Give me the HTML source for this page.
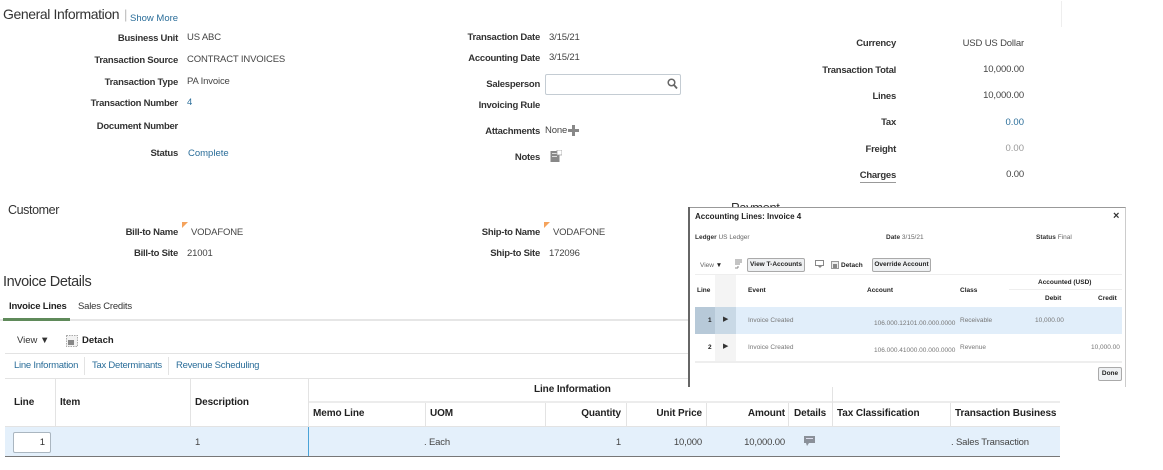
<!DOCTYPE html>
<html><head><meta charset="utf-8"><style>
*{margin:0;padding:0;box-sizing:border-box}
body{width:1163px;height:469px;overflow:hidden;background:#fff;font-family:"Liberation Sans",Arial,sans-serif;position:relative;color:#333}
#w{position:absolute;left:0;top:1px;width:1163px;height:469px}
.a{position:absolute;white-space:nowrap;font-size:9.5px;line-height:12px}
.l{font-weight:bold;color:#333;text-align:right;letter-spacing:-0.25px}
.v{color:#444;letter-spacing:-0.15px}
.b{color:#2a6d99}
.h{position:absolute;white-space:nowrap;color:#333;letter-spacing:-0.4px}
.hl{position:absolute;background:#e3e3e3}
.th{position:absolute;font-weight:bold;font-size:10px;color:#222;white-space:nowrap;letter-spacing:-0.1px}
.flag{position:absolute;width:0;height:0;border-top:6px solid #f5a35c;border-right:6px solid transparent}
</style></head><body><div id="w">

<div class="h" style="left:3px;top:5px;font-size:14px">General Information</div>
<div class="a" style="left:124px;top:8px;color:#bbb;font-size:13px">|</div>
<div class="a b" style="left:130px;top:12px">Show More</div>
<div style="position:absolute;left:1061px;top:0;width:1px;height:26px;background:#eee"></div>

<div class="a l" style="right:985px;top:32px">Business Unit</div><div class="a v" style="left:187px;top:31px">US ABC</div>
<div class="a l" style="right:985px;top:54px">Transaction Source</div><div class="a v" style="left:187px;top:53px">CONTRACT INVOICES</div>
<div class="a l" style="right:985px;top:76px">Transaction Type</div><div class="a v" style="left:187px;top:75px">PA Invoice</div>
<div class="a l" style="right:985px;top:97px">Transaction Number</div><div class="a b" style="left:187px;top:96px">4</div>
<div class="a l" style="right:985px;top:120px">Document Number</div>
<div class="a l" style="right:985px;top:147px">Status</div><div class="a b" style="left:188px;top:147px">Complete</div>

<div class="a l" style="right:623px;top:31px">Transaction Date</div><div class="a v" style="left:549px;top:31px">3/15/21</div>
<div class="a l" style="right:623px;top:52px">Accounting Date</div><div class="a v" style="left:549px;top:51px">3/15/21</div>
<div class="a l" style="right:623px;top:78px">Salesperson</div>
<div style="position:absolute;left:545px;top:73px;width:136px;height:21px;border:1px solid #c4ccd3;border-radius:2px"></div>
<svg style="position:absolute;left:667px;top:77px" width="11" height="12" viewBox="0 0 11 12"><circle cx="4.5" cy="4.5" r="3.3" fill="none" stroke="#666" stroke-width="1.5"/><path d="M7 7l3 3.5" stroke="#666" stroke-width="1.8"/></svg>
<div class="a l" style="right:623px;top:99px">Invoicing Rule</div>
<div class="a l" style="right:623px;top:125px">Attachments</div><div class="a v" style="left:545px;top:124px">None</div>
<svg style="position:absolute;left:568px;top:124px" width="11" height="11"><path d="M4 0h3v4h4v3H7v4H4V7H0V4h4z" fill="#888"/></svg>
<div class="a l" style="right:623px;top:151px">Notes</div>
<svg style="position:absolute;left:550px;top:149px" width="12" height="13"><rect x="0.5" y="1" width="9" height="11" fill="#888"/><rect x="2" y="3" width="5" height="1" fill="#ddd"/><rect x="2" y="6" width="5" height="1" fill="#ddd"/><rect x="7" y="0" width="5" height="5" fill="#fff" stroke="#999" stroke-width="0.7"/></svg>

<div class="a l" style="right:267px;top:37px">Currency</div><div class="a v" style="right:139px;top:37px">USD US Dollar</div>
<div class="a l" style="right:267px;top:64px">Transaction Total</div><div class="a v" style="right:139px;top:63px">10,000.00</div>
<div class="a l" style="right:267px;top:90px">Lines</div><div class="a v" style="right:139px;top:89px">10,000.00</div>
<div class="a l" style="right:267px;top:116px">Tax</div><div class="a b" style="right:139px;top:116px">0.00</div>
<div class="a l" style="right:267px;top:143px">Freight</div><div class="a" style="right:139px;top:142px;color:#999">0.00</div>
<div class="a l" style="right:267px;top:169px;border-bottom:1px solid #999">Charges</div><div class="a v" style="right:139px;top:168px">0.00</div>

<div class="h" style="left:8px;top:202px;font-size:12.5px">Customer</div>
<div class="flag" style="left:182px;top:221px"></div>
<div class="a l" style="right:985px;top:226px">Bill-to Name</div><div class="a v" style="left:191px;top:226px">VODAFONE</div>
<div class="a l" style="right:985px;top:247px">Bill-to Site</div><div class="a v" style="left:187px;top:247px">21001</div>
<div class="flag" style="left:544px;top:221px"></div>
<div class="a l" style="right:623px;top:226px">Ship-to Name</div><div class="a v" style="left:553px;top:226px">VODAFONE</div>
<div class="a l" style="right:623px;top:247px">Ship-to Site</div><div class="a v" style="left:549px;top:247px">172096</div>
<div class="h" style="left:731px;top:199px;font-size:13px">Payment</div>

<div class="h" style="left:3px;top:273px;font-size:14.5px">Invoice Details</div>
<div class="a" style="left:9px;top:300px;font-weight:bold;color:#222;letter-spacing:-0.2px">Invoice Lines</div>
<div class="a" style="left:78px;top:300px;color:#333;letter-spacing:-0.2px">Sales Credits</div>
<div class="hl" style="left:0;top:318px;width:690px;height:2px;background:#e6e6e6"></div>
<div style="position:absolute;left:3px;top:317px;width:67px;height:3px;background:#5f8a5a"></div>

<div class="a" style="left:17px;top:334px;color:#333">View ▼</div>
<svg style="position:absolute;left:66px;top:334px" width="12" height="12"><rect x="0.5" y="0.5" width="11" height="11" fill="#f2f2f2" stroke="#aaa" stroke-dasharray="1.5 1"/><rect x="2" y="5" width="6" height="5" fill="#888"/></svg>
<div class="a" style="left:82px;top:334px;font-weight:bold;color:#222">Detach</div>
<div class="hl" style="left:5px;top:352px;width:685px;height:1px"></div>
<div class="a b" style="left:14px;top:359px;letter-spacing:-0.25px">Line Information</div>
<div class="hl" style="left:84px;top:356px;width:1px;height:18px"></div>
<div class="a b" style="left:92px;top:359px;letter-spacing:-0.25px">Tax Determinants</div>
<div class="hl" style="left:168px;top:356px;width:1px;height:18px"></div>
<div class="a b" style="left:176px;top:359px;letter-spacing:-0.25px">Revenue Scheduling</div>

<!-- table -->
<div class="hl" style="left:5px;top:377px;width:1055px;height:1px"></div>
<div class="hl" style="left:308px;top:400px;width:752px;height:2px;background:#ececec"></div>
<div class="hl" style="left:5px;top:425px;width:1055px;height:1px"></div>
<div class="hl" style="left:55px;top:378px;width:1px;height:48px"></div>
<div class="hl" style="left:190px;top:378px;width:1px;height:48px"></div>
<div class="hl" style="left:308px;top:378px;width:1px;height:48px"></div>
<div class="hl" style="left:425px;top:402px;width:1px;height:24px"></div>
<div class="hl" style="left:545px;top:402px;width:1px;height:24px"></div>
<div class="hl" style="left:626px;top:402px;width:1px;height:24px"></div>
<div class="hl" style="left:706px;top:402px;width:1px;height:24px"></div>
<div class="hl" style="left:788px;top:402px;width:1px;height:24px"></div>
<div class="hl" style="left:832px;top:386px;width:1px;height:40px"></div>
<div class="hl" style="left:950px;top:402px;width:1px;height:24px"></div>
<div class="th" style="left:14px;top:396px">Line</div>
<div class="th" style="left:60px;top:396px">Item</div>
<div class="th" style="left:195px;top:396px">Description</div>
<div class="th" style="left:534px;top:383px">Line Information</div>
<div class="th" style="left:313px;top:407px">Memo Line</div>
<div class="th" style="left:430px;top:407px">UOM</div>
<div class="th" style="right:542px;top:407px">Quantity</div>
<div class="th" style="right:461px;top:407px">Unit Price</div>
<div class="th" style="right:378px;top:407px">Amount</div>
<div class="th" style="left:794px;top:407px">Details</div>
<div class="th" style="left:837px;top:407px">Tax Classification</div>
<div style="position:absolute;left:955px;top:407px;width:103px;overflow:hidden"><div class="th" style="position:static">Transaction Business Category</div></div>
<div style="position:absolute;left:5px;top:426px;width:1055px;height:29px;background:#e4f0fb"></div>
<div style="position:absolute;left:308px;top:426px;width:1px;height:30px;background:#4aa3d8"></div>
<div style="position:absolute;left:5px;top:455px;width:1055px;height:1px;background:#777"></div>
<div style="position:absolute;left:13px;top:431px;width:38px;height:21px;border:1px solid #aab6c0;background:#fff;border-radius:2px;font-size:9.5px;text-align:right;padding:4px 5px 0 0">1</div>
<div class="a v" style="left:195px;top:436px">1</div>
<div class="a v" style="left:424px;top:436px">. Each</div>
<div class="a v" style="right:542px;top:436px">1</div>
<div class="a v" style="right:461px;top:436px">10,000</div>
<div class="a v" style="right:378px;top:436px">10,000.00</div>
<svg style="position:absolute;left:804px;top:435px" width="11" height="10"><rect x="0" y="0" width="11" height="7" fill="#8a9099"/><rect x="2" y="2" width="7" height="1" fill="#dde"/><path d="M2 7h3l-2 3z" fill="#8a9099"/></svg>
<div class="a v" style="left:951px;top:436px">. Sales Transaction</div>

<!-- dialog -->
<div style="position:absolute;left:689px;top:206px;width:437px;height:180px;background:#fff;border:1px solid #aaa;border-right-color:#ccc;border-bottom:none;border-top:1px solid #999"></div>
<div style="position:absolute;left:688px;top:206px;width:2px;height:180px;background:#666"></div>
<div class="a" style="left:695px;top:210px;font-size:8px;font-weight:bold;color:#222">Accounting Lines: Invoice 4</div>
<div class="a" style="left:1113px;top:209px;font-size:11px;font-weight:bold;color:#333">×</div>
<div class="a" style="left:695px;top:231px;font-size:6.5px"><b>Ledger</b> <span style="color:#666">US Ledger</span></div>
<div class="a" style="left:886px;top:231px;font-size:6.5px"><b>Date</b> <span style="color:#666">3/15/21</span></div>
<div class="a" style="left:1036px;top:231px;font-size:6.5px"><b>Status</b> <span style="color:#666">Final</span></div>
<div class="a" style="left:700px;top:259px;font-size:6.5px;color:#666">View <span style="color:#222">▼</span></div>
<svg style="position:absolute;left:734px;top:258px" width="9" height="10"><path d="M1 1h7M1 3h7M1 5h5M4 7v2M1 9h3" stroke="#888" stroke-width="1"/></svg>
<div style="position:absolute;left:747px;top:257px;width:58px;height:14px;border:1px solid #aaa;background:#eef0f2;border-radius:2px;font-size:6.5px;font-weight:bold;text-align:center;line-height:12px;color:#222">View T-Accounts</div>
<svg style="position:absolute;left:815px;top:259px" width="9" height="9"><rect x="0.5" y="0.5" width="8" height="5" fill="none" stroke="#888"/><path d="M3 6l2 2 2-2z" fill="#888"/></svg>
<svg style="position:absolute;left:831px;top:260px" width="8" height="8"><rect x="0.5" y="0.5" width="7" height="7" fill="#eee" stroke="#999"/><rect x="2" y="3" width="4" height="4" fill="#888"/></svg>
<div class="a" style="left:841px;top:259px;font-size:6.5px;font-weight:bold;color:#222">Detach</div>
<div style="position:absolute;left:872px;top:257px;width:59px;height:14px;border:1px solid #aaa;background:#eef0f2;border-radius:2px;font-size:6.5px;font-weight:bold;text-align:center;line-height:12px;color:#222">Override Account</div>
<div class="hl" style="left:695px;top:273px;width:427px;height:1px;background:#eee"></div>
<div style="position:absolute;left:715px;top:274px;width:21px;height:86px;background:#f4f4f4"></div>
<div class="a" style="left:697px;top:284px;font-size:6.5px;font-weight:bold;color:#222">Line</div>
<div class="a" style="left:748px;top:284px;font-size:6.5px;font-weight:bold;color:#222">Event</div>
<div class="a" style="left:867px;top:284px;font-size:6.5px;font-weight:bold;color:#222">Account</div>
<div class="a" style="left:960px;top:284px;font-size:6.5px;font-weight:bold;color:#222">Class</div>
<div class="a" style="left:1038px;top:276px;font-size:6.5px;font-weight:bold;color:#222">Accounted (USD)</div>
<div class="hl" style="left:1009px;top:288px;width:113px;height:1px;background:#eee"></div>
<div class="a" style="left:1045px;top:292px;font-size:6.5px;font-weight:bold;color:#222">Debit</div>
<div class="a" style="left:1098px;top:292px;font-size:6.5px;font-weight:bold;color:#222">Credit</div>
<div style="position:absolute;left:695px;top:306px;width:427px;height:27px;background:#e1eefa"></div>
<div style="position:absolute;left:695px;top:306px;width:20px;height:27px;background:#b7c9d8"></div>
<div style="position:absolute;left:715px;top:306px;width:21px;height:27px;background:#c9d9e6"></div>
<div class="a" style="left:708px;top:314px;font-size:6.5px;font-weight:bold;color:#222">1</div>
<div class="a" style="left:723px;top:313px;font-size:7px;color:#333">▶</div>
<div class="a" style="left:748px;top:314px;font-size:6.5px;color:#777">Invoice Created</div>
<div class="a" style="left:874px;top:317px;font-size:6.5px;color:#777">106.000.12101.00.000.0000</div>
<div class="a" style="left:960px;top:314px;font-size:6.5px;color:#777">Receivable</div>
<div class="a" style="left:1035px;top:314px;font-size:6.5px;color:#777">10,000.00</div>
<div class="a" style="left:708px;top:341px;font-size:6.5px;font-weight:bold;color:#222">2</div>
<div class="a" style="left:723px;top:340px;font-size:7px;color:#333">▶</div>
<div class="a" style="left:748px;top:341px;font-size:6.5px;color:#777">Invoice Created</div>
<div class="a" style="left:874px;top:344px;font-size:6.5px;color:#777">106.000.41000.00.000.0000</div>
<div class="a" style="left:960px;top:341px;font-size:6.5px;color:#777">Revenue</div>
<div class="a" style="left:1091px;top:341px;font-size:6.5px;color:#777">10,000.00</div>
<div class="hl" style="left:695px;top:360px;width:427px;height:2px;background:#eee"></div>
<div style="position:absolute;left:1098px;top:366px;width:24px;height:14px;border:1px solid #aaa;background:#eef0f2;border-radius:2px;font-size:6.5px;font-weight:bold;text-align:center;line-height:12px;color:#222">Done</div>
</div></body></html>
